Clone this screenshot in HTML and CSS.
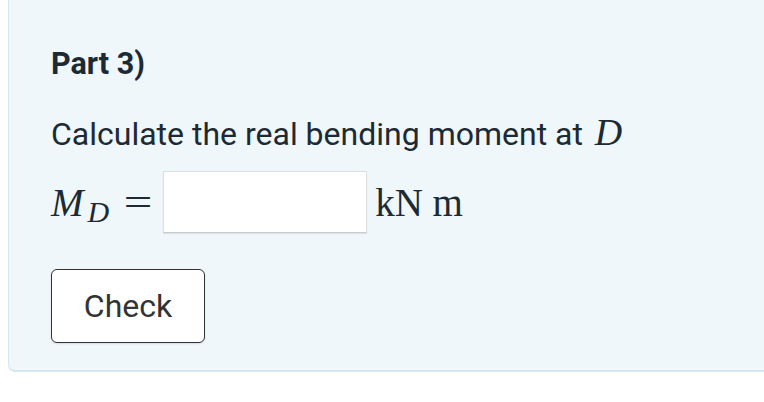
FILE: index.html
```html
<!DOCTYPE html>
<html>
<head>
<meta charset="utf-8">
<link rel="stylesheet" href="styles.css">
</head>
<body>
<div class="panel">
  <h3 class="part-title">Part 3)</h3>
  <p class="prompt">Calculate the real bending moment at <span class="mvar">D</span></p>
  <div class="answer-row">
    <span class="math"><span class="mvar">M</span><span class="msub">D</span><span class="meq">=</span></span>
    <input class="answer-input" type="text">
    <span class="unit">kN m</span>
  </div>
  <button class="check-btn">Check</button>
</div>
</body>
</html>
```
FILE: styles.css
```css
html, body {
  margin: 0;
  padding: 0;
  background: #ffffff;
}
body {
  padding-left: 8px;
  font-family: Roboto, "Liberation Sans", sans-serif;
  color: #1c2a33;
}
.panel {
  background: #eff7fb;
  border-left: 1px solid #d4e8f4;
  border-bottom: 2px solid #d4e8f4;
  border-radius: 0 0 0 7px;
  padding: 46px 0 27px 42px;
}
.part-title {
  margin: 0;
  font-size: 30.5px;
  line-height: 36px;
  font-weight: 700;
}
.prompt {
  margin: 32px 0 0 0;
  font-size: 32px;
  line-height: 36px;
}
.prompt .mvar {
  font-family: "Liberation Serif", serif;
  font-style: italic;
  font-size: 38px;
  line-height: 36px;
  margin-left: 4px;
}
.answer-row {
  margin-top: 19px;
  display: flex;
  align-items: center;
  height: 62px;
}
.math {
  font-family: "Liberation Serif", serif;
  font-size: 39px;
  display: flex;
  align-items: baseline;
}
.math .mvar {
  font-style: italic;
  letter-spacing: 4px;
}
.msub {
  font-style: italic;
  font-size: 30px;
  position: relative;
  top: 6px;
  margin-left: 0;
}
.meq {
  margin-left: 18px;
  transform: scaleX(1.3);
  display: inline-block;
}
.answer-input {
  box-sizing: border-box;
  width: 204px;
  height: 62px;
  margin: 0 0 0 14px;
  background: #fff;
  border: 1px solid #dcdfe1;
  border-bottom-color: #c9cccf;
  box-shadow: 0 1px 1px rgba(0,0,0,0.08);
  padding: 0 8px;
  font-size: 28px;
}
.unit {
  font-family: "Liberation Serif", serif;
  font-size: 39px;
  margin-left: 8px;
}
.check-btn {
  display: block;
  margin-top: 36px;
  box-sizing: border-box;
  width: 154px;
  height: 74px;
  background: #fff;
  border: 1px solid #333;
  border-radius: 6px;
  box-shadow: 0 1px 2px rgba(0,0,0,0.12);
  font-family: Roboto, "Liberation Sans", sans-serif;
  font-size: 32px;
  color: #333;
  padding: 0;
}
```
